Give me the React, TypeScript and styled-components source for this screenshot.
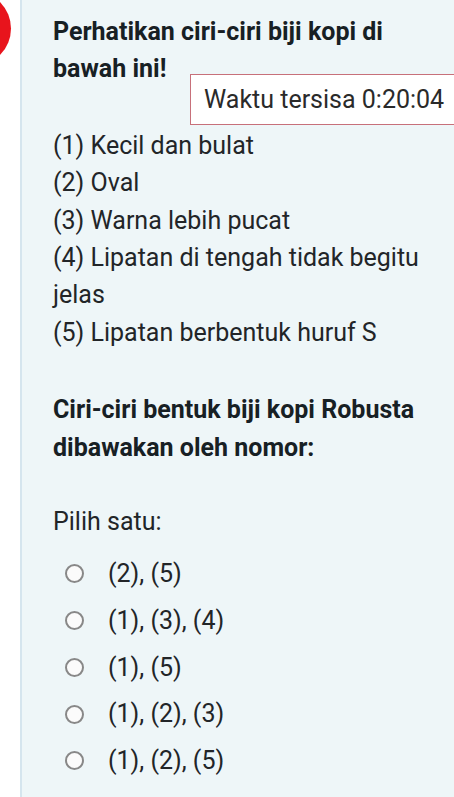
import React from "react";
import styled, { createGlobalStyle } from "styled-components";

const Global = createGlobalStyle`
  html, body { margin: 0; padding: 0; background: #ffffff; }
  body { font-family: Roboto, "Noto Sans", "Liberation Sans", sans-serif; overflow: hidden; }
`;

const Page = styled.div`
  position: relative;
  display: flex;
  width: 454px;
  height: 797px;
  overflow: hidden;
  background: #ffffff;
`;

const Gutter = styled.div`
  width: 20px;
  flex: none;
`;

const Badge = styled.div`
  position: absolute;
  left: -60px;
  top: -8px;
  width: 71px;
  height: 73px;
  border-radius: 50%;
  background: #e8141c;
`;

const Panel = styled.main`
  flex: 1;
  background: #eef6f8;
  border-left: 2px solid #d5e5ee;
  padding: 13px 20px 0 31px;
  color: #1d2125;
  font-size: 25px;
  line-height: 37.4px;
`;

const Para = styled.p<{ $bold?: boolean; $gap?: number }>`
  margin: ${(p) => p.$gap ?? 0}px 0 0 0;
  font-weight: ${(p) => (p.$bold ? 700 : 400)};
  color: ${(p) => (p.$bold ? "#172024" : "#222528")};
`;

const Timer = styled.div`
  position: absolute;
  left: 190px;
  top: 74px;
  width: 290px;
  height: 51px;
  box-sizing: border-box;
  border: 1px solid #c7707a;
  background: #ffffff;
  display: flex;
  align-items: center;
  padding-left: 13px;
  font-size: 25px;
  color: #2a2a2a;
`;

const Options = styled.div`
  display: flex;
  flex-direction: column;
  margin-top: 10px;
`;

const Option = styled.label`
  display: flex;
  align-items: center;
  height: 46.75px;
  font-size: 25px;
  color: #222528;
`;

const Radio = styled.span`
  width: 19px;
  height: 19px;
  box-sizing: border-box;
  border: 2px solid #888888;
  border-radius: 50%;
  background: #fbfbfb;
  margin-left: 12px;
  margin-right: 24px;
  flex: none;
`;

const items = [
  "(1) Kecil dan bulat",
  "(2) Oval",
  "(3) Warna lebih pucat",
  "(4) Lipatan di tengah tidak begitu jelas",
  "(5) Lipatan berbentuk huruf S",
];

const options = ["(2), (5)", "(1), (3), (4)", "(1), (5)", "(1), (2), (3)", "(1), (2), (5)"];

export default function App() {
  return (
    <Page>
      <Global />
      <Badge />
      <Gutter />
      <Panel>
        <Para $bold>Perhatikan ciri-ciri biji kopi di bawah ini!</Para>
        <Para $gap={39}>
          {items.map((t, i) => (
            <React.Fragment key={i}>
              {t}
              {i < items.length - 1 && <br />}
            </React.Fragment>
          ))}
        </Para>
        <Para $bold $gap={40}>
          Ciri-ciri bentuk biji kopi Robusta dibawakan oleh nomor:
        </Para>
        <Para $gap={37}>Pilih satu:</Para>
        <Options>
          {options.map((o) => (
            <Option key={o}>
              <Radio />
              {o}
            </Option>
          ))}
        </Options>
      </Panel>
      <Timer>Waktu tersisa 0:20:04</Timer>
    </Page>
  );
}
